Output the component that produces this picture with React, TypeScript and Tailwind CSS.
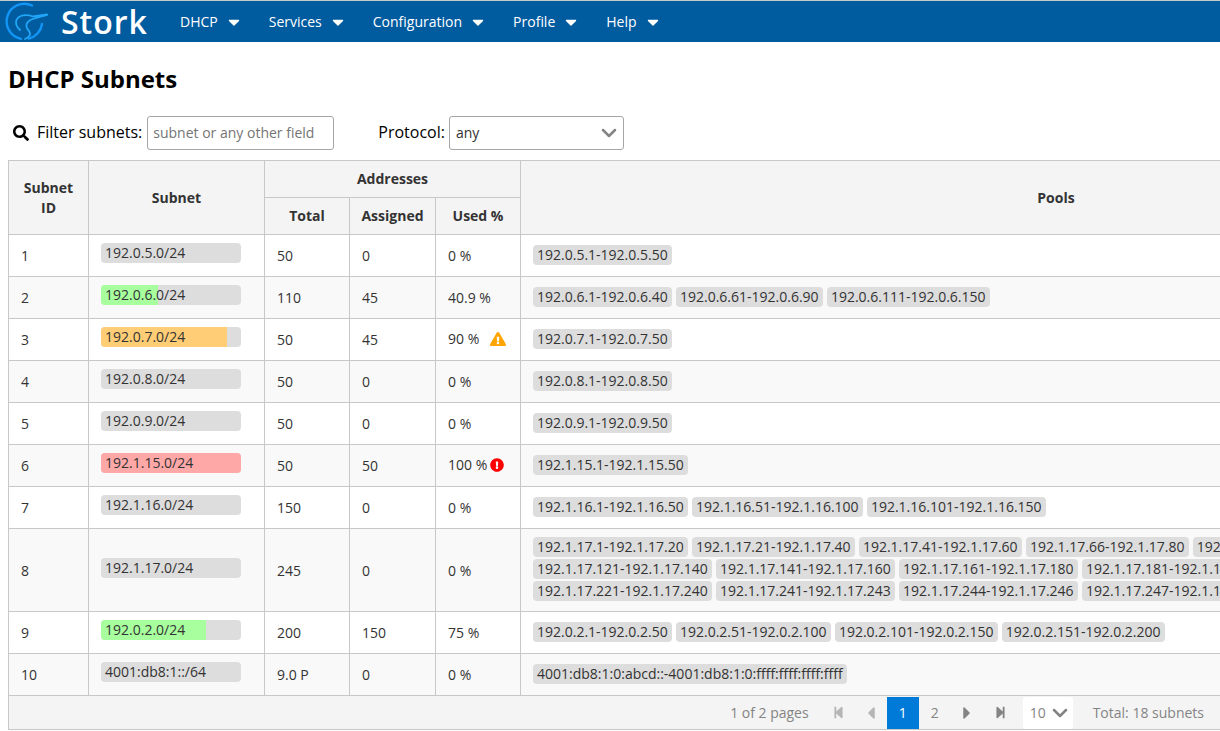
import React from 'react';
import { FaCaretDown, FaCaretLeft, FaCaretRight, FaExclamationCircle, FaExclamationTriangle, FaSearch, FaStepBackward, FaStepForward } from 'react-icons/fa';
import { ChevronDown } from 'lucide-react';

type Row = {
  id: number;
  subnet: string;
  total: string;
  assigned: string;
  used: string;
  fill: number;
  color: string;
  alert?: 'warn' | 'error';
  pools: string[];
};

const rows: Row[] = [
  { id: 1, subnet: '192.0.5.0/24', total: '50', assigned: '0', used: '0 %', fill: 0, color: '', pools: ['192.0.5.1-192.0.5.50'] },
  { id: 2, subnet: '192.0.6.0/24', total: '110', assigned: '45', used: '40.9 %', fill: 40.9, color: '#a8ff9e', pools: ['192.0.6.1-192.0.6.40', '192.0.6.61-192.0.6.90', '192.0.6.111-192.0.6.150'] },
  { id: 3, subnet: '192.0.7.0/24', total: '50', assigned: '45', used: '90 %', fill: 90, color: '#ffcd75', alert: 'warn', pools: ['192.0.7.1-192.0.7.50'] },
  { id: 4, subnet: '192.0.8.0/24', total: '50', assigned: '0', used: '0 %', fill: 0, color: '', pools: ['192.0.8.1-192.0.8.50'] },
  { id: 5, subnet: '192.0.9.0/24', total: '50', assigned: '0', used: '0 %', fill: 0, color: '', pools: ['192.0.9.1-192.0.9.50'] },
  { id: 6, subnet: '192.1.15.0/24', total: '50', assigned: '50', used: '100 %', fill: 100, color: '#ffa8a8', alert: 'error', pools: ['192.1.15.1-192.1.15.50'] },
  { id: 7, subnet: '192.1.16.0/24', total: '150', assigned: '0', used: '0 %', fill: 0, color: '', pools: ['192.1.16.1-192.1.16.50', '192.1.16.51-192.1.16.100', '192.1.16.101-192.1.16.150'] },
  {
    id: 8,
    subnet: '192.1.17.0/24',
    total: '245',
    assigned: '0',
    used: '0 %',
    fill: 0,
    color: '',
    pools: [
      '192.1.17.1-192.1.17.20', '192.1.17.21-192.1.17.40', '192.1.17.41-192.1.17.60', '192.1.17.66-192.1.17.80', '192.1.17.81-192.1.17.120',
      '192.1.17.121-192.1.17.140', '192.1.17.141-192.1.17.160', '192.1.17.161-192.1.17.180', '192.1.17.181-192.1.17.220',
      '192.1.17.221-192.1.17.240', '192.1.17.241-192.1.17.243', '192.1.17.244-192.1.17.246', '192.1.17.247-192.1.17.250',
    ],
  },
  { id: 9, subnet: '192.0.2.0/24', total: '200', assigned: '150', used: '75 %', fill: 75, color: '#a8ff9e', pools: ['192.0.2.1-192.0.2.50', '192.0.2.51-192.0.2.100', '192.0.2.101-192.0.2.150', '192.0.2.151-192.0.2.200'] },
  { id: 10, subnet: '4001:db8:1::/64', total: '9.0 P', assigned: '0', used: '0 %', fill: 0, color: '', pools: ['4001:db8:1:0:abcd::-4001:db8:1:0:ffff:ffff:ffff:ffff'] },
];

const menus = ['DHCP', 'Services', 'Configuration', 'Profile', 'Help'];

function StorkLogo() {
  return (
    <svg width="48" height="40" viewBox="0 0 48 40" fill="none" strokeLinecap="round">
      <path d="M32 3.5A17.7 17.7 0 1 0 21 36.85" stroke="#1295f5" strokeWidth="2.4" />
      <path d="M42 22A17.7 17.7 0 0 1 29 36.6" stroke="#1295f5" strokeWidth="2.4" />
      <path d="M47 12.5L33 14.5C26 12 19 13 16.5 18C15 22 17 25 20 28" stroke="#1fa6f7" strokeWidth="1.8" />
      <path d="M47 13C40 15 33 16 29 19C25 22 26 26 29 29C31 32 30 35 25 37" stroke="#1fa6f7" strokeWidth="1.8" />
    </svg>
  );
}

function Pill({ children }: { children: React.ReactNode }) {
  return <span className="inline-block whitespace-nowrap rounded-[4px] bg-[#dddddd] px-1 leading-[20px]">{children}</span>;
}

export default function App() {
  return (
    <div className="h-[731px] w-[1220px] overflow-hidden bg-white font-['Open_Sans',sans-serif] text-[14px] text-[#333333]">
      <nav className="flex h-[42px] items-center border-t border-[#c8c8c8] bg-[#005b9f]">
        <div className="flex w-[180px] items-center">
          <StorkLogo />
          <span className="ml-[13px] text-[32px] font-semibold leading-none tracking-[1px] text-white">Stork</span>
        </div>
        <ul className="flex items-center">
          {menus.map((menu) => (
            <li key={menu} className="flex items-center gap-[7px] pr-[26px] text-[14px] text-white">
              {menu}
              <FaCaretDown size={18} />
            </li>
          ))}
        </ul>
      </nav>

      <h1 className="ml-2 mt-[19px] text-[24px] font-bold leading-[36px] text-black">DHCP Subnets</h1>

      <div className="mt-[19px] flex h-[34px] items-center pl-[13px] text-black">
        <FaSearch size={16} />
        <span className="ml-[8px] pb-[2px] text-[16px]">Filter subnets:</span>
        <div className="ml-[5px] flex h-[34px] w-[187px] items-center rounded-[3px] border border-[#a6a6a6] bg-white pb-[2px] pl-[5px] text-[14px] text-[#757575]">
          subnet or any other field
        </div>
        <span className="ml-[44px] pb-[2px] text-[16px]">Protocol:</span>
        <div className="ml-1 flex h-[34px] w-[175px] items-center justify-between rounded-[3px] border border-[#a6a6a6] bg-white pl-[6px] pr-[2px] text-[14px] text-[#333333]">
          <span className="pb-[2px]">any</span>
          <ChevronDown size={24} strokeWidth={2.5} className="text-[#848484]" />
        </div>
      </div>

      <div className="ml-2 mt-[10px] w-[1584px]">
        <table className="w-full table-fixed border-collapse">
          <colgroup>
            <col className="w-[80px]" />
            <col className="w-[176px]" />
            <col className="w-[85px]" />
            <col className="w-[86px]" />
            <col className="w-[85px]" />
            <col />
          </colgroup>
          <thead className="bg-[#f4f4f4] font-bold">
            <tr className="h-[37px]">
              <th rowSpan={2} className="border border-[#c8c8c8] px-2 leading-[20px]">Subnet<br />ID</th>
              <th rowSpan={2} className="border border-[#c8c8c8]">Subnet</th>
              <th colSpan={3} className="border border-[#c8c8c8] pb-[2px]">Addresses</th>
              <th rowSpan={2} className="border border-[#c8c8c8]">Pools</th>
            </tr>
            <tr className="h-[37px]">
              <th className="border border-[#c8c8c8] pb-[2px]">Total</th>
              <th className="border border-[#c8c8c8] pb-[2px]">Assigned</th>
              <th className="border border-[#c8c8c8] pb-[2px]">Used %</th>
            </tr>
          </thead>
          <tbody>
            {rows.map((row) => (
              <tr key={row.id} className={`${row.id === 8 ? 'h-[83px]' : 'h-[42px]'} ${row.id % 2 === 0 ? 'bg-[#f9f9f9]' : 'bg-white'}`}>
                <td className="border border-[#c8c8c8] px-[12px]">{row.id}</td>
                <td className={`border border-[#c8c8c8] px-[12px] ${row.id === 8 ? 'pb-[4px]' : 'pt-[8px] align-top'}`}>
                  <div className="relative h-[20px] w-[140px] overflow-hidden rounded-[4px] bg-[#dddddd]">
                    {row.fill > 0 && (
                      <div className="absolute inset-y-0 left-0" style={{ width: `${row.fill}%`, backgroundColor: row.color }} />
                    )}
                    <span className="relative block pl-1 leading-[19px]">{row.subnet}</span>
                  </div>
                </td>
                <td className="border border-[#c8c8c8] px-[12px]">{row.total}</td>
                <td className="border border-[#c8c8c8] px-[12px]">{row.assigned}</td>
                <td className={`border border-[#c8c8c8] px-[12px] ${row.alert ? 'pb-[2px]' : ''}`}>
                  <div className="flex items-center">
                    {row.used}
                    {row.alert === 'warn' && <FaExclamationTriangle size={16} className="ml-[11px] text-[#ffa500]" />}
                    {row.alert === 'error' && <FaExclamationCircle size={14} className="ml-[3px] text-[#ff0000]" />}
                  </div>
                </td>
                <td className="border border-[#c8c8c8] px-[12px] pb-[2px] leading-[22px]">
                  <div className="flex w-[836px] flex-wrap gap-x-[4.3px] gap-y-[2px]">
                    {row.pools.map((pool) => (
                      <Pill key={pool}>{pool}</Pill>
                    ))}
                  </div>
                </td>
              </tr>
            ))}
          </tbody>
        </table>
        <div className="flex h-[34px] items-center justify-end border border-t-0 border-[#c8c8c8] bg-[#f4f4f4] pr-[387px] text-[#848484]">
          <span>1 of 2 pages</span>
          <span className="ml-[14px] flex items-center text-[#b5b5b5]">
            <span className="flex w-[32px] justify-center"><FaStepBackward size={13} /></span>
            <span className="flex w-[32px] justify-center"><FaCaretLeft size={20} /></span>
          </span>
          <span className="flex h-[32px] w-[32px] items-center justify-center bg-[#007ad9] text-white">1</span>
          <span className="flex h-[32px] w-[32px] items-center justify-center">2</span>
          <span className="flex w-[33px] justify-center"><FaCaretRight size={20} /></span>
          <span className="flex w-[33px] justify-center"><FaStepForward size={13} /></span>
          <span className="ml-[6px] flex h-[32px] w-[50px] items-center justify-between rounded-[3px] bg-white pl-[7px] pr-[1px]">
            10
            <ChevronDown size={24} strokeWidth={2.5} />
          </span>
          <span className="ml-[20px]">Total: 18 subnets</span>
        </div>
      </div>
    </div>
  );
}
